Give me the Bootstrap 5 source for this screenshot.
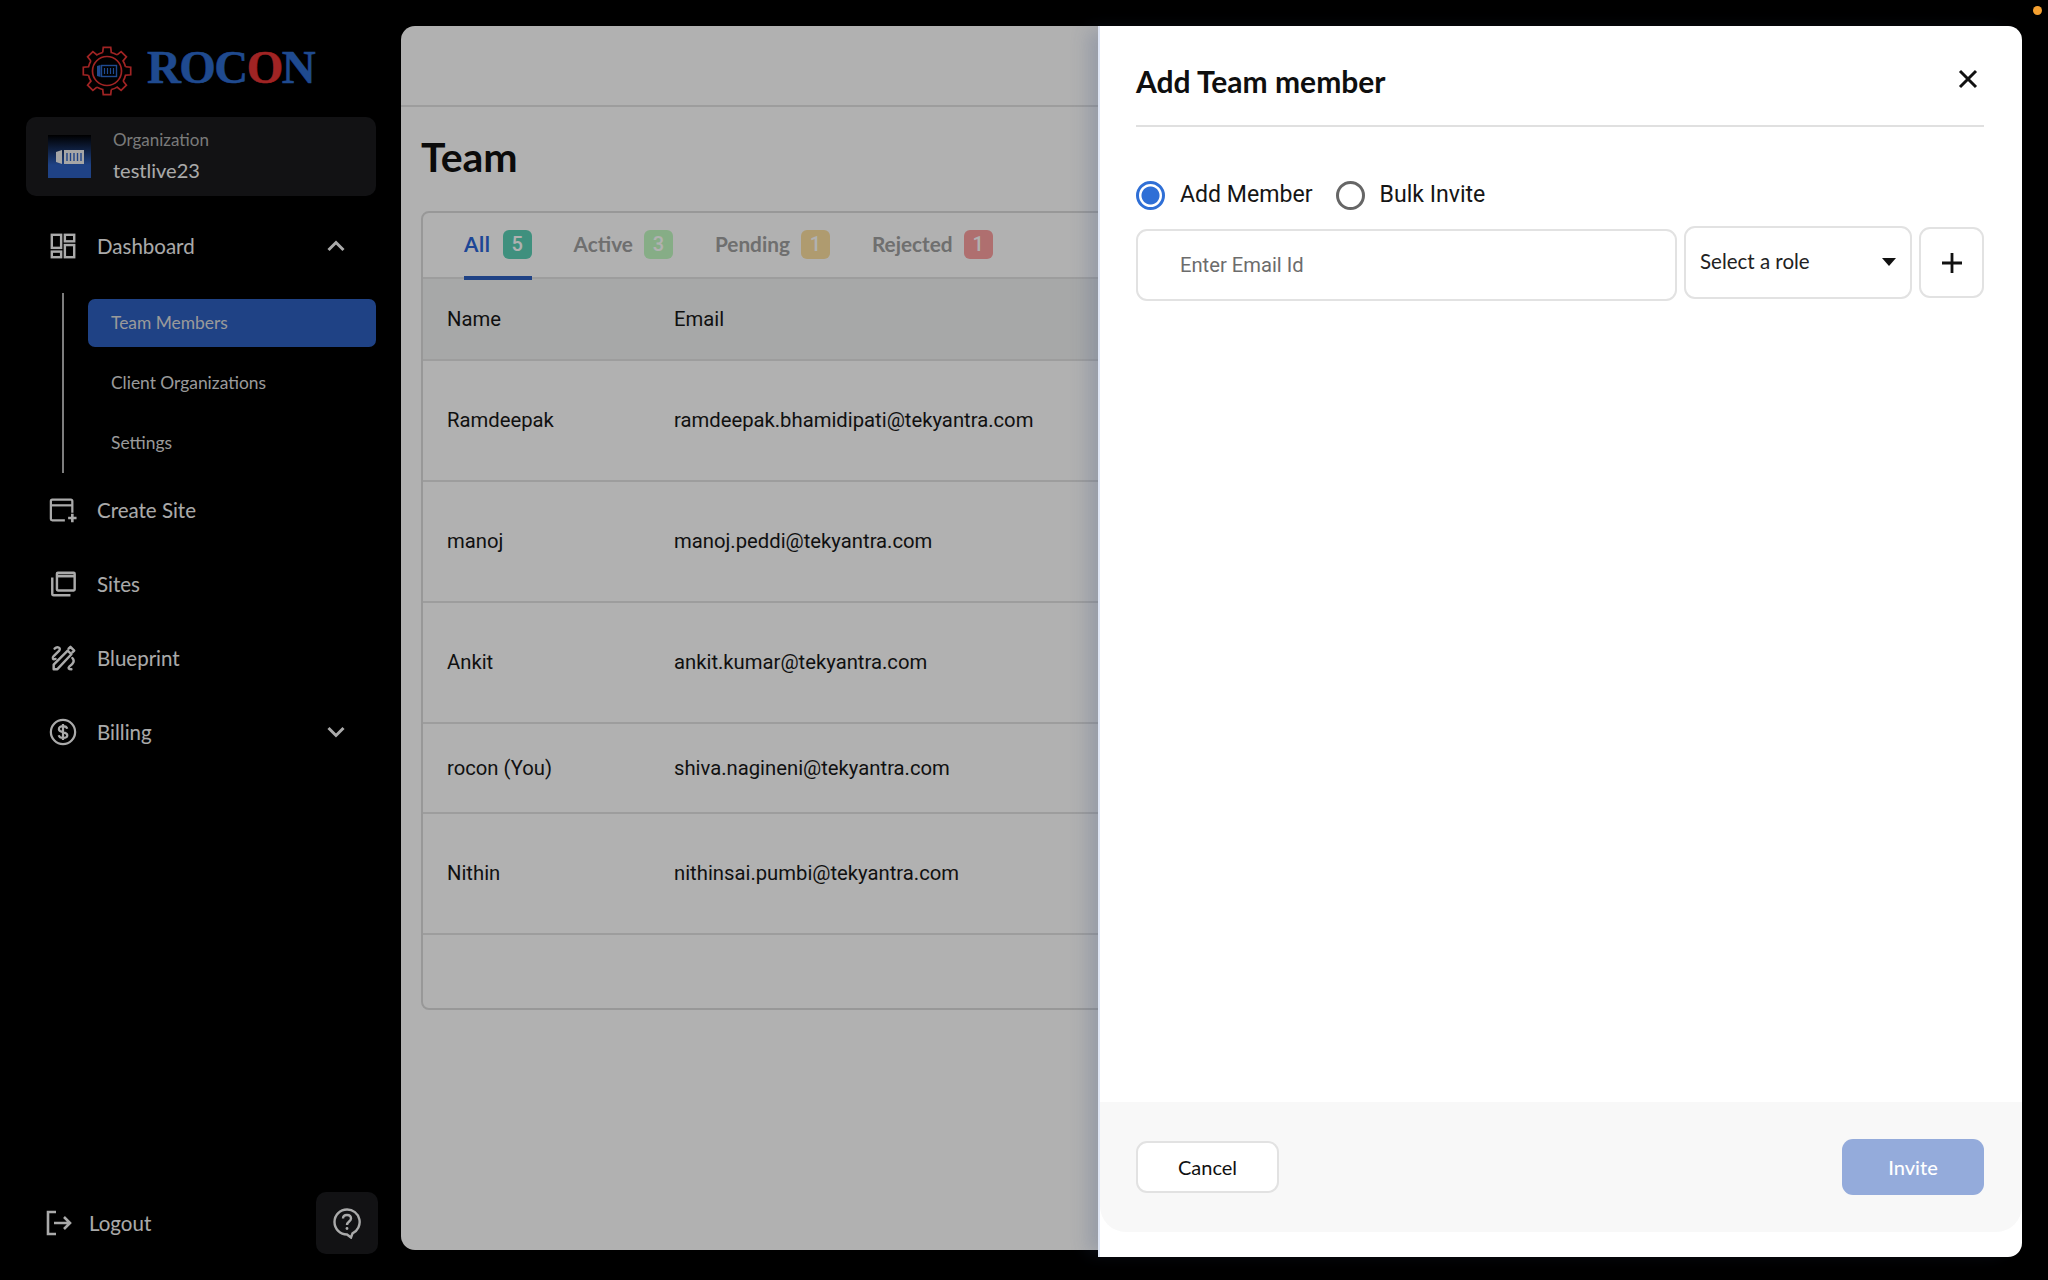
<!DOCTYPE html>
<html lang="en">
<head>
<meta charset="utf-8">
<title>Team</title>
<link href="https://cdn.jsdelivr.net/npm/bootstrap@5.3.0/dist/css/bootstrap.min.css" rel="stylesheet">
<style>
html,body{height:1280px;overflow:hidden}
body{background:#000;font-family:"Lato","Noto Sans",sans-serif;color:#181818;position:relative}
.shell{height:1280px}
.side{width:401px;flex:none;padding:45px 0 26px 26px;color:#f5f5f5}
.logo-row{height:72px;padding-left:55px;gap:14px}
.logo-word{font-family:"Liberation Serif",serif;font-weight:700;font-size:47px;letter-spacing:-1.6px;line-height:1;color:#2d6bce;-webkit-text-stroke:.5px currentColor;margin-top:-1px}
.logo-word i{font-style:normal;color:#e73434}
.org{width:350px;height:79px;background:#1a1b1e;border-radius:10px;padding-left:22px;gap:22px}
.org-pic{width:43px;height:43px;background:linear-gradient(#000,#2d60c0 70%);flex:none}
.org-lbl{font-size:17px;color:#b0b0b0;line-height:24px}
.org-name{font-size:20px;line-height:32px;margin-top:2px}
.nav-top{height:74px;padding-left:23px;padding-right:31px;width:350px;font-size:20.5px}
.nav-top svg.ico{width:28px;height:28px;flex:none;margin-right:20px}
.nav-first{margin-top:13px}
.sub-wrap{margin-left:36px;border-left:2px solid #b4b4b4;padding-left:24px;height:180px;margin-top:10px;padding-top:6px;width:314px}
.sub-link{height:48px;border-radius:7px;padding-left:23px;font-size:17.4px;margin-bottom:12px;color:#dedede}
.sub-on{background:#2d60c0}
.foot-row{padding-left:19px;width:352px;margin-top:auto}
.help{width:62px;height:62px;background:#1a1b1e;border-radius:10px}
.panel{position:absolute;left:401px;top:26px;width:1618px;height:1224px;background:#fff;border-radius:14px;overflow:hidden}
.panel-head{height:81px;border-bottom:2px solid #e2e2e2}
.panel-title{font-size:41px;font-weight:700;line-height:50px;padding:25px 20px 0;margin:0;color:#111}
.team-card{margin:29px 20px 0;height:799px;border:2px solid #dcdcdc;border-radius:8px;background:#fff;overflow:hidden}
.tabs-row{height:66px;padding-left:41px;gap:42px;border-bottom:2px solid #e2e2e2}
.tab-item{height:67px;font-size:20.8px;font-weight:700;color:#a0a0a0;gap:11px;padding-bottom:5px}
.tab-on{color:#2b66d8;border-bottom:4px solid #2d60c0;gap:12px;padding-bottom:1px}
.tab-on span:first-child{letter-spacing:.6px}
.tab-num{width:29px;height:29px;border-radius:6px;color:#fff;font-weight:500;font-size:20px;font-family:"Roboto",sans-serif}
.n-all{background:#5bd0b6}.n-act{background:#c2fac2}.n-pen{background:#fde0a0}.n-rej{background:#fda0a0}
.team-tbl{margin:0;--bs-table-bg:transparent;border-color:#e2e2e2;font-family:"Roboto",sans-serif;font-size:20.25px;table-layout:fixed;width:100%}
.team-tbl th,.team-tbl td{padding:0 0 0 24px;vertical-align:middle;font-weight:400;color:#181818;border-bottom:2px solid #e2e2e2}
.team-tbl thead th{background:#f1f2f3;height:81px}
.col-a{width:227px}
.rh{height:121px}.rs{height:90px}
.scrim{position:absolute;inset:0;background:rgba(0,0,0,.306)}
.drawer{position:absolute;left:1098px;top:26px;width:924px;height:1231px;background:#fff;border-radius:0 14px 14px 0;box-shadow:-14px 0 18px -4px rgba(60,80,130,.22);border-left:2px solid #dfe6f5}
.draw-body{padding:0 38px 0 36px;height:1076px}
.draw-head{height:101px;border-bottom:2px solid #e0e0e0}
.draw-title{font-size:30px;font-weight:700;margin:11px 0 0;color:#0f0f0f;line-height:36px}
.x-btn{background:none;border:0;padding:0;margin:6px 4px 0 0;line-height:0}
.radio-row{margin-top:50px;height:36px;gap:15px;font-size:23.1px;font-family:"Roboto",sans-serif;color:#151515}
.radio-row .form-check{display:flex;align-items:center;gap:15px;padding:0;margin:0;min-height:0}
.radio-row .form-check-input{float:none;margin:0;width:29px;height:29px;border:3px solid #666;background-color:#fff;flex:none}
.radio-row .form-check-input:checked{border-color:#2f6fd6;background-color:#fff;background-image:radial-gradient(circle,#2f6fd6 0,#2f6fd6 8.5px,transparent 9.5px)}
.radio-row .form-check-label{line-height:1}
.fields{margin-top:13px;gap:7px;align-items:flex-start;height:76px}
.email{width:541px;height:72px;margin-top:3px;border:2px solid #e2e2e2;border-radius:11px;padding-left:42px;font-size:20.2px;font-family:"Roboto",sans-serif;box-shadow:none}
.email::placeholder{color:#6c6c6c}
.role{width:228px;height:73px;border:2px solid #e2e2e2;border-radius:11px;padding:0 14px 2px;font-size:20.5px;font-family:"Lato",sans-serif;background:#fff;color:#222}
.caret{width:0;height:0;border-left:7px solid transparent;border-right:7px solid transparent;border-top:8px solid #111;margin-right:0}
.plus{width:65px;height:71px;margin-top:1px;border:2px solid #e2e2e2;border-radius:11px;background:#fff;padding:0;flex:none}
.draw-foot{height:130px;background:#f8f8f8;border-radius:0 0 26px 26px;padding:0 38px 0 36px}
.cancel{width:143px;height:52px;border:2px solid #e2e2e2;border-radius:11px;background:#fff;color:#111;font-size:20px;margin-top:-1px}
.invite{width:142px;height:56px;border-radius:11px;border:0;background:#94abdb;color:#fff;font-size:20px;opacity:1;font-weight:500}
.dot{position:absolute;left:2033px;top:6px;width:9px;height:9px;border-radius:50%;background:#f5a030}
</style>
</head>
<body>
<div class="shell d-flex">
  <aside class="side d-flex flex-column">
    <div class="logo-row d-flex align-items-start">
      <svg width="52" height="52" viewBox="-26 -26 52 52" fill="none" stroke="#e73434" stroke-width="1.7" aria-hidden="true">
        <defs><path id="tooth" d="M-4.27 -18.5 L-3.75 -23.7 L3.75 -23.7 L4.27 -18.5 A19 19 0 0 1 10.07 -16.11"/></defs>
        <use href="#tooth"/><use href="#tooth" transform="rotate(45)"/><use href="#tooth" transform="rotate(90)"/><use href="#tooth" transform="rotate(135)"/><use href="#tooth" transform="rotate(180)"/><use href="#tooth" transform="rotate(225)"/><use href="#tooth" transform="rotate(270)"/><use href="#tooth" transform="rotate(315)"/>
        <circle r="14.5"/>
        <path d="M-10 -5 L-6.5 -6 V6 L-10 5Z" fill="#2d6bce" stroke="none"/>
        <rect x="-5.5" y="-5.5" width="15" height="11" stroke="#2d6bce" stroke-width="1.4"/>
        <path d="M-2.5 -3V3M0.5 -3V3M3.5 -3V3M6.5 -3V3" stroke="#2d6bce" stroke-width="1.2"/>
      </svg>
      <div class="logo-word">ROC<i>O</i>N</div>
    </div>
    <div class="org d-flex align-items-center">
      <div class="org-pic d-flex align-items-center justify-content-center">
        <svg width="28" height="16" viewBox="0 0 28 16" aria-hidden="true"><path d="M0 3 L6 1 V15 L0 13Z" fill="#f0f0f0"/><rect x="8" y="1" width="20" height="14" fill="#f0f0f0"/><path d="M11 4V12M14.5 4V12M18 4V12M21.5 4V12M25 4V12" stroke="#2d60c0" stroke-width="1.4"/></svg>
      </div>
      <div>
        <div class="org-lbl">Organization</div>
        <div class="org-name">testlive23</div>
      </div>
    </div>
    <div class="nav-top nav-first d-flex align-items-center">
      <svg class="ico" viewBox="0 0 30 30" fill="none" stroke="#f5f5f5" stroke-width="2.6" aria-hidden="true"><rect x="3" y="3" width="10" height="14"/><rect x="17" y="3" width="10" height="7"/><rect x="3" y="21" width="10" height="6"/><rect x="17" y="14" width="10" height="13"/></svg>
      <span>Dashboard</span>
      <svg class="ms-auto" width="18" height="12" viewBox="0 0 18 12" fill="none" stroke="#f5f5f5" stroke-width="3" aria-hidden="true"><path d="M1.5 10 L9 2.5 L16.5 10"/></svg>
    </div>
    <div class="sub-wrap">
      <div class="sub-link sub-on d-flex align-items-center">Team Members</div>
      <div class="sub-link d-flex align-items-center">Client Organizations</div>
      <div class="sub-link d-flex align-items-center">Settings</div>
    </div>
    <div class="nav-top d-flex align-items-center">
      <svg class="ico" viewBox="0 0 30 30" fill="none" stroke="#f5f5f5" stroke-width="2.4" aria-hidden="true"><path d="M17 26H3.5A1.5 1.5 0 0 1 2 24.5V5.5A1.5 1.5 0 0 1 3.5 4H23.5A1.5 1.5 0 0 1 25 5.5V18"/><path d="M2 10H25"/><path d="M25 19V28M20.5 23.5H29.5" stroke-width="2.8"/></svg>
      <span>Create Site</span>
    </div>
    <div class="nav-top d-flex align-items-center">
      <svg class="ico" viewBox="0 0 30 30" fill="none" stroke="#f5f5f5" stroke-width="2.6" aria-hidden="true"><rect x="8.5" y="3" width="19" height="19" rx="1"/><path d="M8.5 6.5H27.5" stroke-width="3"/><path d="M3.5 8V25.5A1.5 1.5 0 0 0 5 27H23"/></svg>
      <span>Sites</span>
    </div>
    <div class="nav-top d-flex align-items-center">
      <svg class="ico" viewBox="0 0 30 30" fill="none" stroke="#f5f5f5" stroke-width="2.6" stroke-linecap="round" stroke-linejoin="round" aria-hidden="true"><path d="M6 5C9 2 13 4 11 7L5 13C3 15 4 17 7 16"/><path d="M9 27L5 27L5 22L20 7L24 11Z"/><path d="M21 5L23 3L27 7L25 9"/><path d="M25 15C28 18 26 21 22 24C20 26 21 27 24 27"/></svg>
      <span>Blueprint</span>
    </div>
    <div class="nav-top d-flex align-items-center">
      <svg class="ico" viewBox="0 0 30 30" fill="none" stroke="#f5f5f5" stroke-width="2.4" aria-hidden="true"><circle cx="15" cy="15" r="13"/><path d="M19.5 11.5C19 9.5 17 8.8 15 8.8C12.5 8.8 10.6 10 10.6 12C10.6 14 12.5 14.6 15 15.2C17.5 15.8 19.6 16.4 19.6 18.5C19.6 20.4 17.5 21.4 15 21.4C12.8 21.4 11 20.5 10.4 18.5M15 6.5V23.5"/></svg>
      <span>Billing</span>
      <svg class="ms-auto" width="18" height="12" viewBox="0 0 18 12" fill="none" stroke="#f5f5f5" stroke-width="3" aria-hidden="true"><path d="M1.5 2 L9 9.5 L16.5 2"/></svg>
    </div>
    <div class="foot-row d-flex align-items-center justify-content-between">
      <div class="d-flex align-items-center" style="font-size:20.5px">
        <svg width="28" height="28" viewBox="0 0 28 28" fill="none" stroke="#f5f5f5" stroke-width="2.6" class="me-3" aria-hidden="true"><path d="M11 3H3V25H11"/><path d="M9 14H25M19 8L25 14L19 20"/></svg>
        <span>Logout</span>
      </div>
      <div class="help d-flex align-items-center justify-content-center">
        <svg width="30" height="32" viewBox="0 0 30 32" fill="none" stroke="#f5f5f5" stroke-width="2.4" aria-hidden="true"><path d="M15 2.5A12.5 12.5 0 0 0 15 27.5L19 30.5L20.5 26.3A12.5 12.5 0 0 0 15 2.5Z"/><path d="M11 11.5C11 9 13 8 15 8C17.5 8 19 9.5 19 11.5C19 14.5 15 14.5 15 18"/><circle cx="15" cy="21.5" r="1.4" fill="#f5f5f5" stroke="none"/></svg>
      </div>
    </div>
  </aside>
</div>

<main class="panel">
  <div class="panel-head"></div>
  <h1 class="panel-title">Team</h1>
  <div class="team-card">
    <div class="tabs-row d-flex">
      <div class="tab-item tab-on d-flex align-items-center"><span>All</span> <span class="tab-num n-all d-flex align-items-center justify-content-center">5</span></div>
      <div class="tab-item d-flex align-items-center"><span>Active</span> <span class="tab-num n-act d-flex align-items-center justify-content-center">3</span></div>
      <div class="tab-item d-flex align-items-center"><span>Pending</span> <span class="tab-num n-pen d-flex align-items-center justify-content-center">1</span></div>
      <div class="tab-item d-flex align-items-center"><span>Rejected</span> <span class="tab-num n-rej d-flex align-items-center justify-content-center">1</span></div>
    </div>
    <table class="table team-tbl">
      <thead><tr><th class="col-a">Name</th><th>Email</th></tr></thead>
      <tbody>
        <tr class="rh"><td>Ramdeepak</td><td>ramdeepak.bhamidipati@tekyantra.com</td></tr>
        <tr class="rh"><td>manoj</td><td>manoj.peddi@tekyantra.com</td></tr>
        <tr class="rh"><td>Ankit</td><td>ankit.kumar@tekyantra.com</td></tr>
        <tr class="rs"><td>rocon (You)</td><td>shiva.nagineni@tekyantra.com</td></tr>
        <tr class="rh"><td>Nithin</td><td>nithinsai.pumbi@tekyantra.com</td></tr>
      </tbody>
    </table>
  </div>
</main>

<div class="scrim"></div>

<section class="drawer d-flex flex-column">
  <div class="draw-body">
    <div class="draw-head d-flex justify-content-between align-items-center">
      <h2 class="draw-title">Add Team member</h2>
      <button class="x-btn" type="button" aria-label="Close"><svg width="24" height="24" viewBox="0 0 24 24" fill="none" stroke="#111" stroke-width="3" aria-hidden="true"><path d="M4 4L20 20M20 4L4 20"/></svg></button>
    </div>
    <div class="radio-row d-flex align-items-center">
      <div class="form-check"><input class="form-check-input" type="radio" name="mode" id="m1" checked><label class="form-check-label" for="m1">Add Member</label></div>
      <div class="form-check ms-2"><input class="form-check-input" type="radio" name="mode" id="m2"><label class="form-check-label" for="m2">Bulk Invite</label></div>
    </div>
    <div class="fields d-flex">
      <input class="form-control email" type="text" placeholder="Enter Email Id">
      <div class="role d-flex align-items-center justify-content-between"><span>Select a role</span><span class="caret"></span></div>
      <button class="plus d-flex align-items-center justify-content-center" type="button" aria-label="Add"><svg width="24" height="24" viewBox="0 0 24 24" stroke="#111" stroke-width="2.8" aria-hidden="true"><path d="M12 2V22M2 12H22"/></svg></button>
    </div>
  </div>
  <div class="draw-foot d-flex align-items-center justify-content-between">
    <button class="btn cancel" type="button">Cancel</button>
    <button class="btn invite" type="button">Invite</button>
  </div>
</section>
<div class="dot"></div>
<script src="https://cdn.jsdelivr.net/npm/bootstrap@5.3.0/dist/js/bootstrap.bundle.min.js"></script>
</body>
</html>
